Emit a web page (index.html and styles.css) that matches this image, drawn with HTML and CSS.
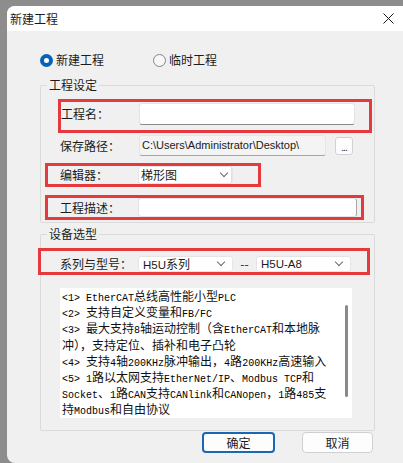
FILE: index.html
```html
<!DOCTYPE html>
<html lang="zh-CN">
<head>
<meta charset="utf-8">
<title>新建工程</title>
<link rel="stylesheet" href="styles.css">
</head>
<body>
<div class="dialog">
  <div class="titlebar">
    <span class="title">新建工程</span>
    <span class="close"><svg width="11" height="11" viewBox="0 0 11 11"><path d="M0.5 0.5 L10.5 10.5 M10.5 0.5 L0.5 10.5" stroke="#1a1a1a" stroke-width="1" fill="none"/></svg></span>
  </div>
  <div class="body">
    <div class="radios">
      <label class="radio r1"><span class="dot on"></span>新建工程</label>
      <label class="radio"><span class="dot"></span>临时工程</label>
    </div>
    <fieldset class="group g1">
      <legend>工程设定</legend>
      <div class="row mark m1"><span class="lbl">工程名：</span><span class="input name"></span></div>
      <div class="row rpath"><span class="lbl">保存路径：</span><span class="input path">C:\Users\Administrator\Desktop\</span><span class="more">...</span></div>
      <div class="row mark m2"><span class="lbl l2">编辑器：</span><span class="combo ced"><span class="ctext">梯形图</span><span class="chev"></span><span class="csep"></span></span></div>
      <div class="row mark m3"><span class="lbl l2">工程描述：</span><span class="input desc"></span></div>
    </fieldset>
    <fieldset class="group g2">
      <legend>设备选型</legend>
      <div class="row mark m4"><span class="lbl l4">系列与型号：</span><span class="combo c4"><span class="ctext"><span class="lat">H5U</span>系列</span><span class="chev"></span></span><span class="dash">--</span><span class="combo c4"><span class="ctext lat">H5U-A8</span><span class="chev"></span></span></div>
      <div class="memo">
        <div class="line"><span class="en">&lt;1&gt; EtherCAT</span>总线高性能小型<span class="en">PLC</span></div>
        <div class="line"><span class="en">&lt;2&gt; </span>支持自定义变量和<span class="en">FB/FC</span></div>
        <div class="line"><span class="en">&lt;3&gt; </span>最大支持<span class="en">8</span>轴运动控制（含<span class="en">EtherCAT</span>和本地脉</div>
        <div class="line">冲），支持定位、插补和电子凸轮</div>
        <div class="line"><span class="en">&lt;4&gt; </span>支持<span class="en">4</span>轴<span class="en">200KHz</span>脉冲输出，<span class="en">4</span>路<span class="en">200KHz</span>高速输入</div>
        <div class="line"><span class="en">&lt;5&gt; 1</span>路以太网支持<span class="en">EtherNet/IP</span>、<span class="en">Modbus TCP</span>和</div>
        <div class="line"><span class="en">Socket</span>、<span class="en">1</span>路<span class="en">CAN</span>支持<span class="en">CANlink</span>和<span class="en">CANopen</span>，<span class="en">1</span>路<span class="en">485</span>支</div>
        <div class="line">持<span class="en">Modbus</span>和自由协议</div>
        <span class="thumb"></span>
      </div>
    </fieldset>
    <div class="buttons">
      <span class="btn primary">确定</span>
      <span class="btn">取消</span>
    </div>
  </div>
</div>
</body>
</html>
```

FILE: styles.css
```css
html, body {
  margin: 0;
  padding: 0;
}
body {
  background: #8d8d8d;
  width: 403px;
  height: 463px;
  overflow: hidden;
  font-family: "Noto Sans CJK SC", "Noto Sans", sans-serif;
  font-size: 12px;
  color: #1b1b1b;
}
.dialog {
  margin: 6px 0 0 7px;
  width: 396px;
  height: 457px;
  border-radius: 8px 0 0 8px;
  background: #f0f0f0;
  overflow: hidden;
}
.titlebar {
  height: 25px;
  background: #ffffff;
  display: flex;
  align-items: center;
  padding-left: 3px;
}
.title {
  font-size: 12px;
  line-height: 14px;
}
.close {
  margin-left: auto;
  width: 30px;
  height: 25px;
  display: flex;
  align-items: center;
  justify-content: center;
}
.close svg { display: block; }
.body {
  padding-left: 33px;
}
.radios {
  margin-top: 22px;
  height: 14px;
  display: flex;
  align-items: center;
}
.radio {
  display: flex;
  align-items: center;
  line-height: 14px;
}
.r1 { width: 113px; }
.dot {
  width: 13px;
  height: 13px;
  box-sizing: border-box;
  border-radius: 50%;
  border: 1px solid #848484;
  background: #f7f7f7;
  margin-right: 3px;
}
.dot.on {
  border: 4px solid #0a62b8;
  background: #ffffff;
}
.group {
  margin: 0;
  padding: 0;
  width: 335px;
  box-sizing: border-box;
  border: 1px solid #dadada;
  border-radius: 2px;
  min-width: 0;
}
.group legend {
  padding: 0 2px;
  margin-left: 6px;
  line-height: 14px;
  font-size: 12px;
}
.g1 { margin-top: 11px; padding-bottom: 2px; }
.g2 { margin-top: 4px; padding-bottom: 12px; }
.row {
  display: flex;
  box-sizing: border-box;
}
.mark {
  border: 3px solid #e6393d;
}
.lbl {
  flex: none;
  width: 78px;
  line-height: 16px;
}
.m1 {
  margin-top: 7px;
  margin-left: 17px;
  width: 314px;
  height: 34px;
  align-items: flex-start;
  padding-top: 1px;
}
.m1 .lbl { line-height: 22px; }
.input {
  box-sizing: border-box;
  background: #ffffff;
  border: 1px solid #e3e3e3;
  border-bottom: 1px solid #8a8a8a;
  border-radius: 3px;
}
.name {
  width: 216px;
  height: 22px;
}
.rpath {
  margin-top: 2px;
  margin-left: 19px;
  align-items: center;
  height: 21px;
}
.rpath .lbl { width: 79px; }
.path {
  width: 187px;
  height: 21px;
  background: #f4f4f4;
  border: 1px solid #e6e6e6;
  border-bottom: 1px solid #a5a5a5;
  padding-left: 2px;
  line-height: 19px;
  font-family: "Liberation Sans", sans-serif;
  font-size: 11px;
  white-space: nowrap;
  overflow: hidden;
}
.more {
  margin-left: 9px;
  width: 18px;
  height: 18px;
  box-sizing: border-box;
  border: 1px solid #d2d2d2;
  border-radius: 3px;
  background: #fdfdfd;
  font-size: 10px;
  line-height: 17px;
  text-align: center;
  letter-spacing: -1px;
  color: #333;
}
.m2 {
  margin-top: 7px;
  margin-left: 4px;
  width: 216px;
  height: 24px;
  padding-left: 12px;
  align-items: center;
}
.combo {
  box-sizing: border-box;
  display: flex;
  align-items: center;
  background: #ffffff;
  border: 1px solid #e5e5e5;
  border-radius: 3px;
  width: 95px;
  padding-left: 2px;
}
.ced { height: 18px; }
.ctext {
  line-height: 14px;
  font-size: 12px;
}
.lat {
  font-family: "Liberation Sans", sans-serif;
  font-size: 11.5px;
}
.chev {
  margin-left: auto;
  margin-right: 4px;
  width: 5px;
  height: 5px;
  border-right: 1px solid #6a6a6a;
  border-bottom: 1px solid #6a6a6a;
  transform: translateY(-2px) rotate(45deg);
}
.csep {
  width: 1px;
  height: 16px;
  background: #e0e0e0;
}
.m3 {
  margin-top: 8px;
  margin-left: 4px;
  width: 319px;
  height: 25px;
  padding-left: 12px;
  align-items: center;
}
.desc {
  width: 219px;
  height: 19px;
  border-right: 1px solid #a8a8a8;
  border-bottom: 1px solid #e3e3e3;
}
.m4 {
  margin-top: 7px;
  margin-left: -3px;
  width: 332px;
  height: 27px;
  padding-left: 19px;
  align-items: flex-end;
}
.l4 { line-height: 16px; }
.c4 {
  height: 16px;
  padding-left: 4px;
}
.c4 .chev { margin-right: 8px; }
.dash {
  width: 23px;
  text-align: center;
  line-height: 16px;
}
.memo {
  position: relative;
  margin-top: 13px;
  margin-left: 19px;
  width: 292px;
  height: 130px;
  background: #ffffff;
  padding-left: 2px;
  box-sizing: border-box;
  font-family: "Noto Sans CJK SC", sans-serif;
  font-size: 12px;
  color: #111;
}
.line {
  height: 16.2px;
  line-height: 16.2px;
  white-space: nowrap;
}
.en {
  font-family: "Liberation Mono", monospace;
  font-size: 10px;
  white-space: pre;
  color: #000;
}
.thumb {
  position: absolute;
  left: 285px;
  top: 17px;
  width: 3px;
  height: 92px;
  border-radius: 2px;
  background: #8a8a8a;
}
.buttons {
  display: flex;
  margin-top: 1px;
  margin-left: 162px;
  gap: 27px;
}
.btn {
  box-sizing: border-box;
  width: 73px;
  height: 21px;
  border: 1px solid #d0d0d0;
  border-radius: 4px;
  background: #fdfdfd;
  text-align: center;
  line-height: 19px;
  font-size: 12px;
}
.btn + .btn { width: 71px; }
.btn.primary {
  border: 2px solid #1a67b4;
  line-height: 17px;
}
```
